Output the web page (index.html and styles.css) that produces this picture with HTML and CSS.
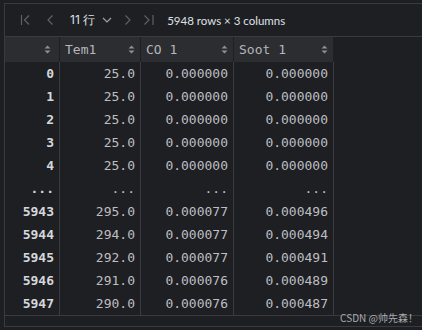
FILE: index.html
```html
<!DOCTYPE html>
<html lang="zh">
  <head>
    <meta charset="UTF-8" />
    <title>DataFrame</title>
    <link rel="stylesheet" href="styles.css">
  </head>
  <body>
    <div class="frame">
      <div class="toolbar">
        <span class="nav dim">
          <svg width="12" height="12" viewBox="0 0 12 12"><path d="M1.5 1v10M9 1.5L4.5 6L9 10.5" /></svg>
        </span>
        <span class="nav dim">
          <svg width="8" height="12" viewBox="0 0 8 12"><path d="M6.5 1.5L2 6L6.5 10.5" /></svg>
        </span>
        <span class="pager">11 行
          <svg width="10" height="6" viewBox="0 0 10 6"><path d="M1 1l4 4l4-4" /></svg>
        </span>
        <span class="nav dim">
          <svg width="8" height="12" viewBox="0 0 8 12"><path d="M1.5 1.5L6 6L1.5 10.5" /></svg>
        </span>
        <span class="nav dim">
          <svg width="12" height="12" viewBox="0 0 12 12"><path d="M1.5 1.5L6 6L1.5 10.5M10 1v10" /></svg>
        </span>
        <span class="summary">5948 rows × 3 columns</span>
      </div>
      <div class="grid" id="grid"></div>
      <div class="hscroll"></div>
      <div class="watermark">CSDN @帅先森！</div>
    </div>
    <script>
      const rows = [
        ['0', '25.0', '0.000000', '0.000000'],
        ['1', '25.0', '0.000000', '0.000000'],
        ['2', '25.0', '0.000000', '0.000000'],
        ['3', '25.0', '0.000000', '0.000000'],
        ['4', '25.0', '0.000000', '0.000000'],
        ['...', '...', '...', '...'],
        ['5943', '295.0', '0.000077', '0.000496'],
        ['5944', '294.0', '0.000077', '0.000494'],
        ['5945', '292.0', '0.000077', '0.000491'],
        ['5946', '291.0', '0.000076', '0.000489'],
        ['5947', '290.0', '0.000076', '0.000487'],
      ]
      const headers = ['', 'Tem1', 'CO 1', 'Soot 1']
      const sortIcon = '<svg class="sort" width="7" height="9" viewBox="0 0 7 9"><path d="M3.5 0.5L6.5 3.5H0.5Z M3.5 8.5L6.5 5.5H0.5Z" /></svg>'

      const grid = document.getElementById('grid')
      let html = '<div class="row head">'
      headers.forEach((h) => {
        html += `<div class="cell">${h ? `<span class="label">${h}</span>` : ''}${sortIcon}</div>`
      })
      html += '</div>'
      rows.forEach((r) => {
        html += '<div class="row">'
        r.forEach((v, i) => {
          html += `<div class="cell${i === 0 ? ' index' : ''}">${v}</div>`
        })
        html += '</div>'
      })
      grid.innerHTML = html
    </script>
  </body>
</html>
```

FILE: styles.css
```css
body {
  margin: 0;
  background: #1e1f22;
  font-family: 'Inter', 'Noto Sans', sans-serif;
  overflow: hidden;
}

.frame {
  position: relative;
  margin: 3px 0 0 4px;
  height: 322px;
  border-top: 1px solid #393b40;
  border-left: 1px solid #393b40;
  border-bottom: 1px solid #393b40;
}

.toolbar {
  height: 32px;
  display: flex;
  align-items: center;
  padding-left: 15px;
  border-bottom: 1px solid #393b40;
  color: #dfe1e5;
  font-size: 11px;
}

.nav svg,
.pager svg {
  display: block;
  fill: none;
  stroke-width: 1.2;
}

.nav {
  margin-right: 14px;
}

.nav.dim svg {
  stroke: #5e6167;
}

.toolbar .nav:nth-child(2) {
  margin-right: 16px;
}

.toolbar .nav:nth-child(4) {
  margin-right: 11px;
}

.toolbar .nav:nth-child(5) {
  margin-right: 12px;
}

.pager {
  display: flex;
  align-items: center;
  gap: 7px;
  margin-right: 12px;
  font-size: 12px;
}

.pager svg {
  stroke: #9da0a8;
}

.summary {
  font-family: 'Lato', 'Inter', sans-serif;
  font-size: 11.5px;
}

.row {
  display: grid;
  grid-template-columns: 55px 81px 93px 100px;
  height: 23px;
  font-family: 'DejaVu Sans Mono', monospace;
  font-size: 13px;
  color: #bcbec4;
}

.row.head {
  height: 25px;
}

.cell {
  display: flex;
  align-items: center;
  justify-content: flex-end;
  padding-right: 5px;
  border-right: 1px solid #393b40;
}

.head .cell {
  background: #2b2d30;
  border-right-color: #1e1f22;
  justify-content: space-between;
  padding: 0 5px 0 5px;
}

.head .cell:first-child {
  justify-content: flex-end;
  padding-right: 8px;
}

.label {
  color: #b4b6bc;
}

.sort {
  fill: #8c8f94;
}

.index {
  font-weight: bold;
  color: #d5d7dc;
}

.hscroll {
  border-top: 1px solid #393b40;
  height: 9px;
}

.watermark {
  position: absolute;
  right: 4px;
  bottom: 1px;
  font-family: 'Noto Sans CJK SC', sans-serif;
  font-size: 10px;
  color: #a9abb0;
}
```
